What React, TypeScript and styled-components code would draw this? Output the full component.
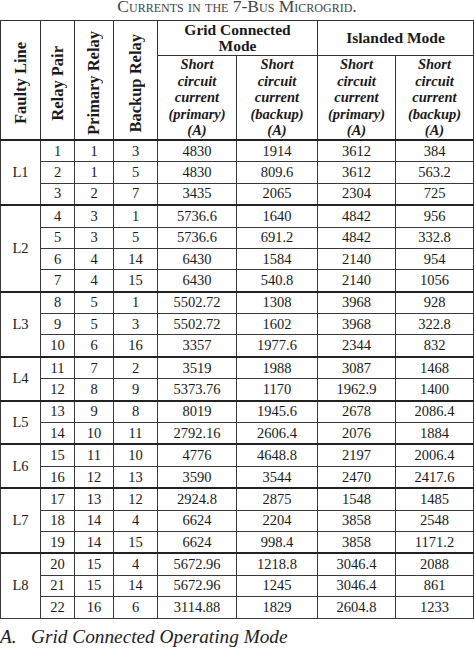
import styled, { createGlobalStyle } from 'styled-components'

const GlobalStyle = createGlobalStyle`
  html, body {
    margin: 0;
    padding: 0;
    background: #fff;
  }
  body {
    font-family: 'Liberation Serif', 'Times New Roman', serif;
    color: #1a1a1a;
    overflow: hidden;
  }
`

type Row = [number, number, number, string, string, string, string]

const groups: { line: string; rows: Row[] }[] = [
  {
    line: 'L1',
    rows: [
      [1, 1, 3, '4830', '1914', '3612', '384'],
      [2, 1, 5, '4830', '809.6', '3612', '563.2'],
      [3, 2, 7, '3435', '2065', '2304', '725'],
    ],
  },
  {
    line: 'L2',
    rows: [
      [4, 3, 1, '5736.6', '1640', '4842', '956'],
      [5, 3, 5, '5736.6', '691.2', '4842', '332.8'],
      [6, 4, 14, '6430', '1584', '2140', '954'],
      [7, 4, 15, '6430', '540.8', '2140', '1056'],
    ],
  },
  {
    line: 'L3',
    rows: [
      [8, 5, 1, '5502.72', '1308', '3968', '928'],
      [9, 5, 3, '5502.72', '1602', '3968', '322.8'],
      [10, 6, 16, '3357', '1977.6', '2344', '832'],
    ],
  },
  {
    line: 'L4',
    rows: [
      [11, 7, 2, '3519', '1988', '3087', '1468'],
      [12, 8, 9, '5373.76', '1170', '1962.9', '1400'],
    ],
  },
  {
    line: 'L5',
    rows: [
      [13, 9, 8, '8019', '1945.6', '2678', '2086.4'],
      [14, 10, 11, '2792.16', '2606.4', '2076', '1884'],
    ],
  },
  {
    line: 'L6',
    rows: [
      [15, 11, 10, '4776', '4648.8', '2197', '2006.4'],
      [16, 12, 13, '3590', '3544', '2470', '2417.6'],
    ],
  },
  {
    line: 'L7',
    rows: [
      [17, 13, 12, '2924.8', '2875', '1548', '1485'],
      [18, 14, 4, '6624', '2204', '3858', '2548'],
      [19, 14, 15, '6624', '998.4', '3858', '1171.2'],
    ],
  },
  {
    line: 'L8',
    rows: [
      [20, 15, 4, '5672.96', '1218.8', '3046.4', '2088'],
      [21, 15, 14, '5672.96', '1245', '3046.4', '861'],
      [22, 16, 6, '3114.88', '1829', '2604.8', '1233'],
    ],
  },
]

const colWidths = [40, 34, 39, 44, 79, 81, 78, 78]

const Page = styled.div`
  width: 474px;
  height: 651px;
  overflow: hidden;
`

const Caption = styled.div`
  height: 20px;
  margin-top: -2px;
  line-height: 17px;
  text-align: center;
  font-variant: small-caps;
  font-size: 17.5px;
  color: #444;
  white-space: nowrap;
`

const Table = styled.table`
  width: 473px;
  margin-top: 2px;
  border-collapse: collapse;
  table-layout: fixed;
  font-family: 'Liberation Serif', 'Times New Roman', serif;
  color: #1a1a1a;
`

const HeadCell = styled.th<{ $group?: boolean }>`
  border: 1px solid #333;
  font-weight: bold;
  font-size: 15.5px;
  line-height: 16px;
  padding: 0;
  text-align: center;
  vertical-align: middle;
  height: ${(p) => (p.$group ? '34px' : 'auto')};
`

const Vertical = styled.div`
  writing-mode: vertical-rl;
  transform: rotate(180deg);
  margin: 6px auto 0;
  white-space: nowrap;
  font-size: 16.5px;
`

const SubHead = styled.th`
  border: 1px solid #333;
  font-weight: bold;
  font-style: italic;
  font-size: 14.5px;
  line-height: 16.6px;
  padding: 0;
  height: 82px;
  text-align: center;
  vertical-align: middle;
`

const Cell = styled.td<{ $first?: boolean }>`
  border: 1px solid #3a3a3a;
  border-top: ${(p) => (p.$first ? '2px solid #222' : '1px solid #3a3a3a')};
  font-size: 14.5px;
  height: 20.4px;
  padding: 0;
  text-align: center;
  vertical-align: middle;
`

const LineCell = styled.td`
  border: 1px solid #3a3a3a;
  border-top: 2px solid #222;
  font-size: 14.5px;
  padding: 0;
  text-align: center;
  vertical-align: middle;
`

const Section = styled.div`
  margin-top: 7px;
  font-style: italic;
  font-size: 19.3px;
  line-height: 22px;
  color: #222;
  white-space: pre;
`

const subHeads = ['primary', 'backup', 'primary', 'backup']

export default function App() {
  return (
    <Page>
      <GlobalStyle />
      <Caption>Currents in the 7-Bus Microgrid.</Caption>
      <Table>
        <colgroup>
          {colWidths.map((w, i) => (
            <col key={i} style={{ width: w }} />
          ))}
        </colgroup>
        <thead>
          <tr>
            {['Faulty Line', 'Relay Pair', 'Primary Relay', 'Backup Relay'].map((t) => (
              <HeadCell key={t} rowSpan={2}>
                <Vertical>{t}</Vertical>
              </HeadCell>
            ))}
            <HeadCell $group colSpan={2}>
              Grid Connected
              <br />
              Mode
            </HeadCell>
            <HeadCell $group colSpan={2}>
              Islanded Mode
            </HeadCell>
          </tr>
          <tr>
            {subHeads.map((s, i) => (
              <SubHead key={i}>
                Short
                <br />
                circuit
                <br />
                current
                <br />({s})
                <br />
                (A)
              </SubHead>
            ))}
          </tr>
        </thead>
        <tbody>
          {groups.map((g) =>
            g.rows.map((r, i) => (
              <tr key={r[0]}>
                {i === 0 && <LineCell rowSpan={g.rows.length}>{g.line}</LineCell>}
                {r.map((v, j) => (
                  <Cell key={j} $first={i === 0}>
                    {v}
                  </Cell>
                ))}
              </tr>
            ))
          )}
        </tbody>
      </Table>
      <Section>{'A.   Grid Connected Operating Mode'}</Section>
    </Page>
  )
}
